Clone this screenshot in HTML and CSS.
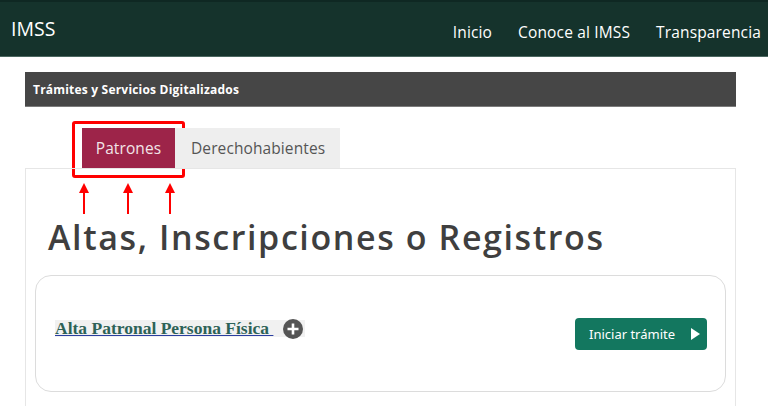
FILE: index.html
```html
<!DOCTYPE html>
<html lang="es">
<head>
<meta charset="utf-8">
<title>IMSS</title>
<link rel="stylesheet" href="styles.css">
</head>
<body>
<header class="topbar">
  <div class="brand">IMSS</div>
  <nav class="nav">
    <a href="#">Inicio</a>
    <a href="#">Conoce al IMSS</a>
    <a href="#">Transparencia</a>
  </nav>
</header>
<main class="wrap">
  <div class="section-bar">Trámites y Servicios Digitalizados</div>
  <div class="tabs">
    <div class="tab tab-active">Patrones<span class="highlight"></span></div>
    <div class="tab">Derechohabientes</div>
  </div>
  <section class="panel">
    <div class="arrows">
      <svg class="arrow a1" width="12" height="32" viewBox="0 0 12 32"><path d="M6 31V6" stroke="#f00" stroke-width="2"/><path d="M6 0L11 10H1Z" fill="#f00"/></svg>
      <svg class="arrow a2" width="12" height="32" viewBox="0 0 12 32"><path d="M6 31V6" stroke="#f00" stroke-width="2"/><path d="M6 0L11 10H1Z" fill="#f00"/></svg>
      <svg class="arrow a3" width="12" height="32" viewBox="0 0 12 32"><path d="M6 31V6" stroke="#f00" stroke-width="2"/><path d="M6 0L11 10H1Z" fill="#f00"/></svg>
    </div>
    <h1 class="title">Altas, Inscripciones o Registros</h1>
    <div class="card">
      <div class="link-wrap">
        <a class="proc-link" href="#">Alta Patronal Persona Física </a>
        <svg class="plus" width="20" height="20" viewBox="0 0 20 20"><circle cx="10" cy="10" r="10" fill="#555"/><path d="M10 4.5v11M4.5 10h11" stroke="#fff" stroke-width="2.6"/></svg>
      </div>
      <button class="btn">Iniciar trámite <span class="tri"></span></button>
    </div>
  </section>
</main>
</body>
</html>
```
FILE: styles.css
```css
html, body {
  margin: 0;
  padding: 0;
  background: #fff;
  overflow: hidden;
}
body {
  font-family: "Open Sans", "Noto Sans", sans-serif;
  color: #404040;
}
.topbar {
  height: 54px;
  background: #15332c;
  border-top: 2px solid #0f2823;
  border-bottom: 1px solid #4b6760;
  display: flex;
  align-items: center;
  justify-content: space-between;
  padding: 0 7px 0 11px;
}
.brand {
  color: #fff;
  font-size: 19.5px;
  margin-top: -2px;
}
.nav {
  display: flex;
  gap: 26px;
  margin-top: 5px;
}
.nav a {
  color: #fff;
  text-decoration: none;
  font-size: 15.5px;
  letter-spacing: 0.15px;
}
.wrap {
  margin: 15px 0 0 25px;
  width: 711px;
}
.section-bar {
  height: 34px;
  background: #464646;
  border-bottom: 1px solid #7b7b7b;
  color: #fff;
  font-size: 12px;
  letter-spacing: 0.2px;
  font-weight: 700;
  display: flex;
  align-items: center;
  padding-left: 8px;
}
.tabs {
  display: flex;
  padding-left: 57px;
  margin-top: 21px;
}
.tab {
  height: 40px;
  display: flex;
  align-items: center;
  padding: 0 15px 0 16px;
  background: #eeeeee;
  color: #555;
  font-size: 15.5px;
  letter-spacing: 0.1px;
  position: relative;
}
.tab-active {
  background: #9d2449;
  color: #f2e4e8;
  width: 93px;
  box-sizing: border-box;
  justify-content: center;
  padding: 0;
}
.highlight {
  position: absolute;
  left: -10px;
  top: -7px;
  width: 107px;
  height: 51px;
  border: 3px solid #f00;
  border-radius: 3px;
}
.panel {
  position: relative;
  border: 1px solid #e6e6e6;
  border-bottom: none;
  height: 260px;
  padding: 0 9px;
}
.arrow {
  position: absolute;
  top: 14px;
}
.a1 { left: 52px; }
.a2 { left: 96px; }
.a3 { left: 138px; }
.title {
  margin: 0;
  padding: 48px 0 0 13px;
  font-size: 34px;
  font-weight: 600;
  line-height: 40px;
  color: #3f3f3f;
  letter-spacing: 1.6px;
}
.card {
  margin-top: 18px;
  height: 115px;
  border: 1px solid #dcdcdc;
  border-radius: 16px;
  display: flex;
  align-items: center;
  justify-content: space-between;
  padding: 0 18px 0 19px;
}
.link-wrap {
  display: flex;
  align-items: center;
  background: #f1f1f1;
  height: 17px;
  margin-top: -10px;
  padding-right: 2px;
}
.proc-link {
  font-family: "Liberation Serif", serif;
  font-weight: 700;
  font-size: 17.5px;
  color: #2d6257;
  text-decoration: underline;
  text-decoration-color: #2a3ea0;
  white-space: pre;
  margin-right: 10px;
}
.plus {
  display: block;
}
.btn {
  width: 132px;
  height: 32px;
  background: #13775f;
  border: none;
  border-radius: 4px;
  color: #fff;
  font-family: "Noto Sans", sans-serif;
  font-size: 13px;
  display: flex;
  align-items: center;
  justify-content: flex-start;
  padding: 0 0 0 14px;
  margin-top: 1px;
}
.tri {
  width: 0;
  height: 0;
  border-left: 9px solid #fff;
  border-top: 6px solid transparent;
  border-bottom: 6px solid transparent;
  margin-left: 16px;
}
```
